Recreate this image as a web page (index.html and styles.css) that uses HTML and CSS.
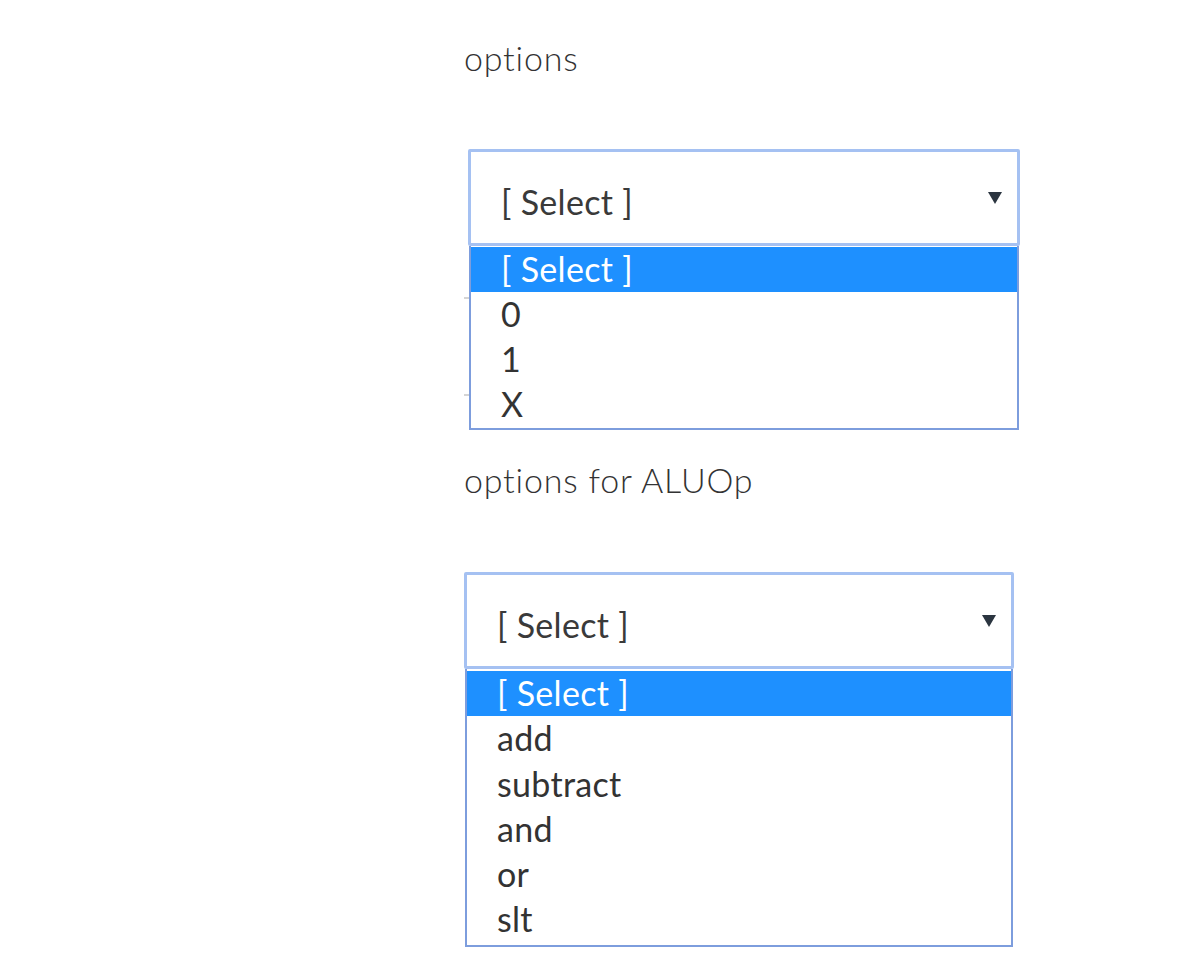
FILE: index.html
```html
<!DOCTYPE html>
<html>
<head>
<meta charset="utf-8">
<link rel="stylesheet" href="styles.css">
</head>
<body>
<div class="page">
  <div class="label">options</div>
  <div class="dropdown first">
    <div class="box">
      <span class="value">[ Select ]</span>
      <svg class="arrow" width="14" height="12" viewBox="0 0 14 12"><path d="M0 0H14L7 12Z" fill="#2b3540"/></svg>
    </div>
    <div class="list">
      <span class="tick tick-a"></span>
      <span class="tick tick-b"></span>
      <div class="opt sel">[ Select ]</div>
      <div class="opt">0</div>
      <div class="opt">1</div>
      <div class="opt">X</div>
    </div>
  </div>
  <div class="label second-label">options for ALUOp</div>
  <div class="dropdown second">
    <div class="box">
      <span class="value">[ Select ]</span>
      <svg class="arrow" width="14" height="12" viewBox="0 0 14 12"><path d="M0 0H14L7 12Z" fill="#2b3540"/></svg>
    </div>
    <div class="list long">
      <span class="vtick"></span>
      <div class="opt sel">[ Select ]</div>
      <div class="opt">add</div>
      <div class="opt">subtract</div>
      <div class="opt">and</div>
      <div class="opt">or</div>
      <div class="opt">slt</div>
    </div>
  </div>
</div>
</body>
</html>
```
FILE: styles.css
```css
html, body {
  margin: 0;
  padding: 0;
  background: #ffffff;
}
.page {
  padding-left: 464px;
  padding-top: 38px;
}
.label {
  font-family: Lato, "Open Sans", sans-serif;
  font-weight: 300;
  font-size: 34px;
  line-height: 40px;
  color: #333333;
  letter-spacing: 0.8px;
}
.dropdown {
  width: 550px;
  margin-top: 71px;
}
.dropdown.first {
  margin-left: 4px;
  width: 552px;
}
.dropdown.second {
  margin-top: 72px;
}
.second-label {
  margin-top: 30px;
}
.box {
  box-sizing: border-box;
  height: 97px;
  border: 3px solid #a5c1f2;
  border-radius: 2px;
  display: flex;
  align-items: center;
  justify-content: space-between;
  padding: 8px 15px 0 30px;
  background: #fff;
}
.value, .opt {
  font-family: Lato, "Open Sans", sans-serif;
  font-size: 34px;
  color: #3a3a3a;
  letter-spacing: 0.3px;
}
.arrow {
  margin-top: -8px;
}
.list {
  position: relative;
  box-sizing: border-box;
  border: 2px solid #7d9ddd;
  border-top: none;
  margin: 0 1px;
  padding: 1px 0;
}
.list.long {
  padding: 2px 0 2px;
}
.list.long .opt {
  height: 45.3px;
}
.opt {
  height: 45px;
  line-height: 44px;
  padding-left: 30px;
  color: #333333;
}
.opt.sel {
  background: #1e90ff;
  color: #ffffff;
}
.tick {
  position: absolute;
  left: -7px;
  width: 5px;
  height: 2px;
  background: #d4d4d4;
}
.tick-a {
  top: 51px;
}
.tick-b {
  top: 148px;
}
.vtick {
  position: absolute;
  left: 0;
  bottom: -8px;
  width: 2px;
  height: 6px;
  background: #dcdcdc;
}
```
